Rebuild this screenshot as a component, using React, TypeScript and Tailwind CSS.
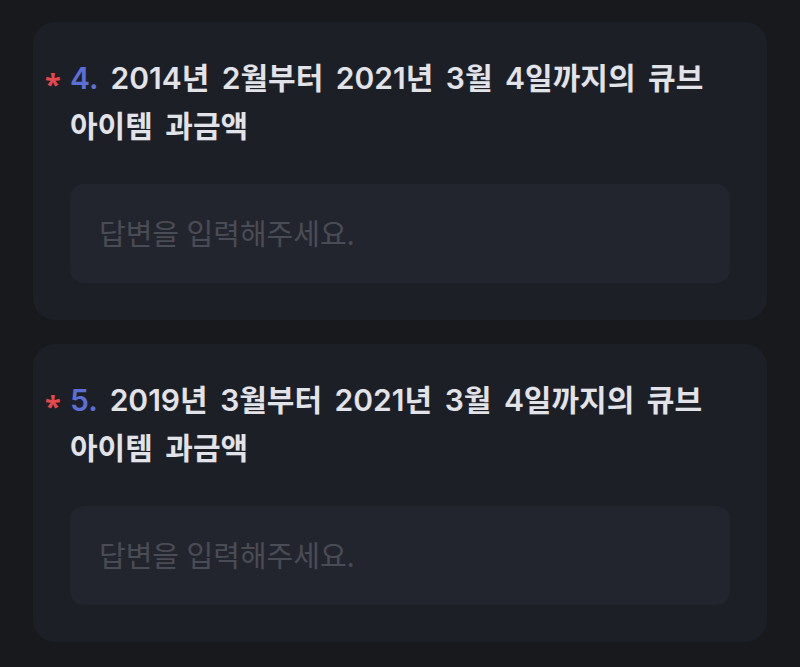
import React from "react";

const questions = [
  { n: "4.", text: "2014년 2월부터 2021년 3월 4일까지의 큐브 아이템 과금액" },
  { n: "5.", text: "2019년 3월부터 2021년 3월 4일까지의 큐브 아이템 과금액" },
];

export default function App() {
  return (
    <div
      className="min-h-[667px] w-full bg-[#18191d] px-[33px] pt-[22px] pb-[24px]"
      style={{ fontFamily: '"Noto Sans", "Noto Sans CJK KR", sans-serif' }}
    >
      <div className="flex flex-col gap-[24px]">
        {questions.map((q) => (
          <div
            key={q.n}
            className="rounded-[22px] bg-[#1d1f27] pl-[37px] pr-[37px] pt-[32px] pb-[37px]"
          >
            <div
              className="break-keep text-[30px] font-semibold leading-[48px] text-[#e2e3e8] [word-spacing:5px]"
              style={{ fontFamily: 'Inter, "Noto Sans CJK KR", sans-serif' }}
            >
              <span className="ml-[-25px] inline-block w-[25px] translate-y-[6px] text-[29px] font-bold text-[#e5484d]" style={{ fontFamily: '"Noto Sans", sans-serif' }}>*</span>
              <span className="text-[#5b6fd6]">{q.n}</span> {q.text}
            </div>
            <div className="mt-[34px] flex h-[99px] items-center rounded-[14px] bg-[#23252e] px-[29px]">
              <span className="text-[29px] font-normal text-[#4a4c55]">답변을 입력해주세요.</span>
            </div>
          </div>
        ))}
      </div>
    </div>
  );
}
